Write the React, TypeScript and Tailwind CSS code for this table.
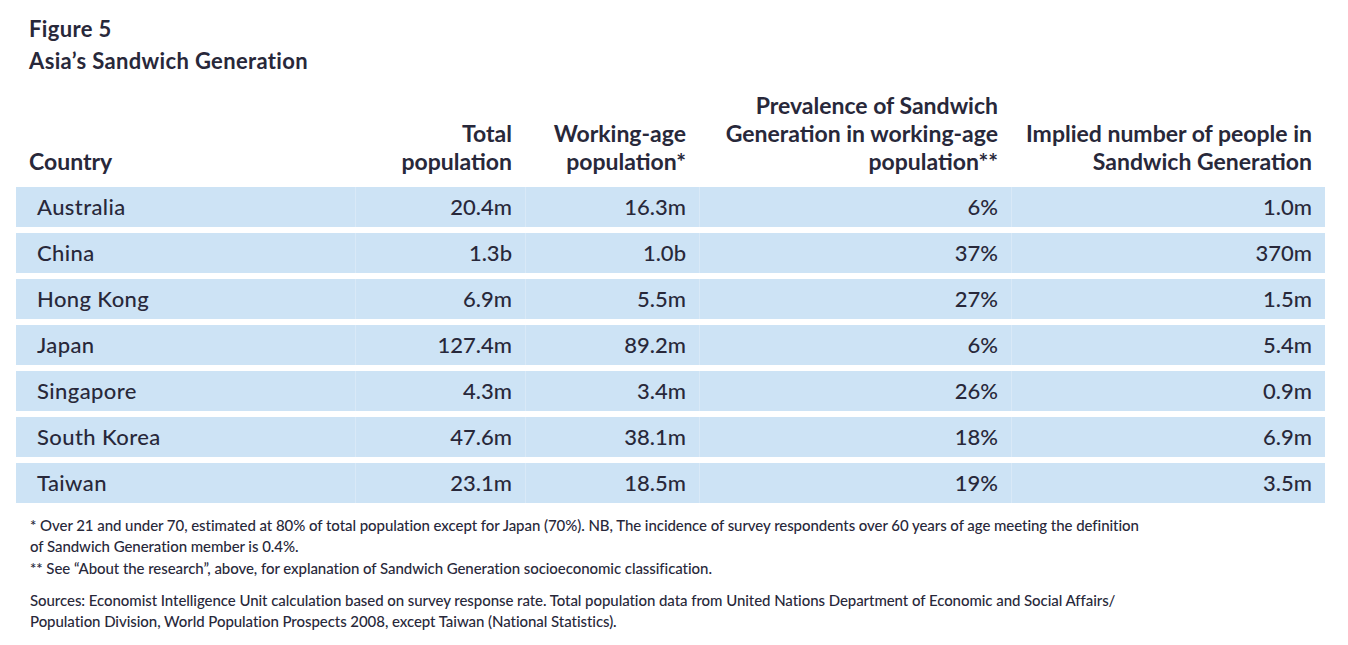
const rows = [
  ["Australia", "20.4m", "16.3m", "6%", "1.0m"],
  ["China", "1.3b", "1.0b", "37%", "370m"],
  ["Hong Kong", "6.9m", "5.5m", "27%", "1.5m"],
  ["Japan", "127.4m", "89.2m", "6%", "5.4m"],
  ["Singapore", "4.3m", "3.4m", "26%", "0.9m"],
  ["South Korea", "47.6m", "38.1m", "18%", "6.9m"],
  ["Taiwan", "23.1m", "18.5m", "19%", "3.5m"],
];

const cols = "grid grid-cols-[339px_170px_174px_312px_314px]";

export default function App() {
  return (
    <div className="min-h-[645px] w-[1348px] bg-white text-[#28283a]" style={{ fontFamily: "Lato, 'Liberation Sans', sans-serif" }}>
      {/* Title */}
      <div className="pl-[29px] pt-[13px]">
        <h1 className="text-[22px] font-bold leading-[32px] tracking-[0.35px]">Figure 5</h1>
        <h2 className="text-[22px] font-bold leading-[32px] tracking-[0.35px]">Asia’s Sandwich Generation</h2>
      </div>

      {/* Table */}
      <div className="ml-[16px] mt-[14px] w-[1309px]">
        <div className={`${cols} items-end text-[23px] font-bold leading-[28px]`}>
          <div className="pl-[13px]">Country</div>
          <div className="pr-[13px] text-right">Total<br />population</div>
          <div className="pr-[13px] text-right">Working-age<br />population*</div>
          <div className="pr-[13px] text-right">Prevalence of Sandwich<br />Generation in working-age<br />population**</div>
          <div className="pr-[13px] text-right">Implied number of people in<br />Sandwich Generation</div>
        </div>

        <div className="mt-[12px] flex flex-col gap-[6px]">
          {rows.map((r) => (
            <div key={r[0]} className={`${cols} h-[40px] items-center bg-[#cde3f5] text-[22px] font-medium leading-[28px]`}>
              <div className="pl-[21px] tracking-[0.4px]">{r[0]}</div>
              {r.slice(1).map((v, i) => (
                <div key={i} className="flex h-full items-center justify-end border-l border-[#d9e9f7] pr-[13px] tabular-nums">
                  {v}
                </div>
              ))}
            </div>
          ))}
        </div>
      </div>

      {/* Notes */}
      <div className="pl-[30px] pt-[12px] text-[15px] leading-[21px] font-medium tracking-[-0.06px]">
        <p>* Over 21 and under 70, estimated at 80% of total population except for Japan (70%). NB, The incidence of survey respondents over 60 years of age meeting the definition<br />of Sandwich Generation member is 0.4%.</p>
        <p className="mt-[1px]">** See “About the research”, above, for explanation of Sandwich Generation socioeconomic classification.</p>
        <p className="mt-[11px]">Sources: Economist Intelligence Unit calculation based on survey response rate. Total population data from United Nations Department of Economic and Social Affairs/<br />Population Division, World Population Prospects 2008, except Taiwan (National Statistics).</p>
      </div>
    </div>
  );
}
